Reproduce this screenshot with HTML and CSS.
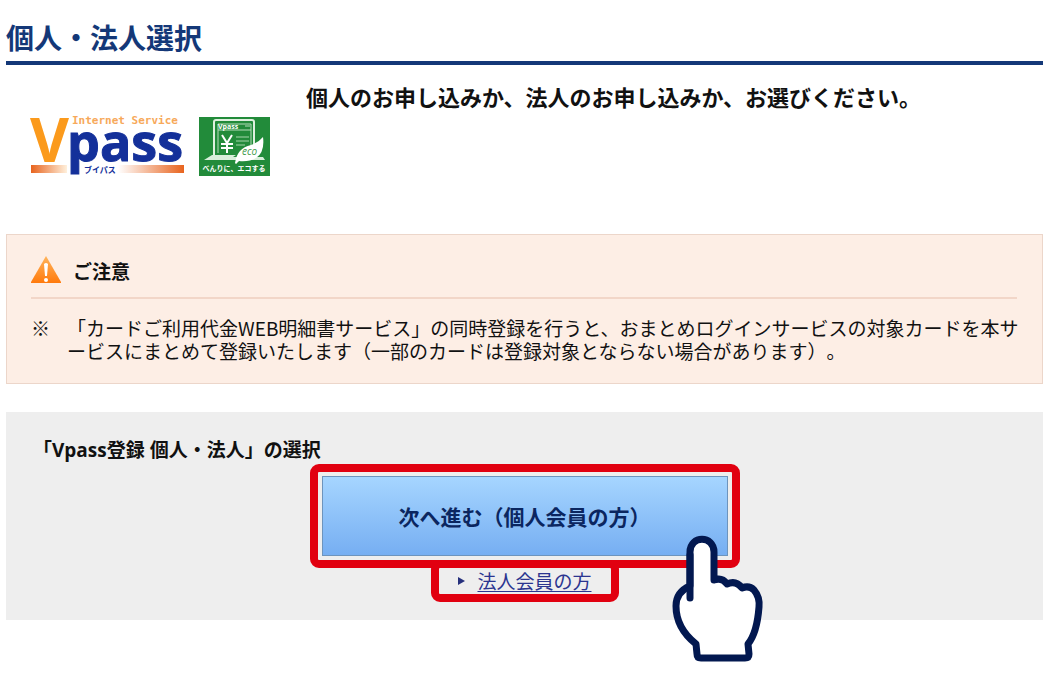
FILE: index.html
```html
<!DOCTYPE html>
<html lang="ja">
<head>
<meta charset="utf-8">
<meta name="viewport" content="width=device-width, initial-scale=1">
<title>個人・法人選択</title>
<link rel="stylesheet" href="styles.css">
</head>
<body>
<main class="page">
  <h1 class="page-title">個人・法人選択</h1>

  <section class="intro">
    <div class="logos">
      <svg class="logo-vpass" width="156" height="60" viewBox="0 0 156 60" role="img" aria-label="Vpass">
        <defs>
          <linearGradient id="barLeft"><stop offset="0" stop-color="#e8641e"/><stop offset="1" stop-color="#fff0dc"/></linearGradient>
          <linearGradient id="barRight"><stop offset="0" stop-color="#ffffff"/><stop offset="1" stop-color="#e8641e"/></linearGradient>
        </defs>
        <rect x="1" y="48" width="36" height="8" fill="url(#barLeft)"/>
        <rect x="88" y="48" width="66" height="8" fill="url(#barRight)"/>
        <text class="logo-v" x="0" y="45">V</text>
        <text class="logo-pass" x="37" y="44">pass</text>
        <text class="logo-service" x="42" y="7">Internet Service</text>
        <text class="logo-kana" x="54" y="56">ブイパス</text>
      </svg>
      <svg class="logo-eco" width="71" height="59" viewBox="0 0 71 59" role="img" aria-label="べんりに、エコする">
        <rect width="71" height="59" fill="#228b3a"/>
        <path d="M15 38V5q0-2 2-2h36q2 0 2 2v26" fill="none" stroke="#dff0df" stroke-width="2"/>
        <path d="M19 36V7h33v26" fill="none" stroke="#b4dcb8" stroke-width="1"/>
        <path d="M19 13h33M46 9h5" stroke="#b4dcb8"/>
        <text class="eco-brand" x="19" y="12">Vpass</text>
        <path d="M13 38h24l-3 2h30l2 3H5z" fill="#d8eeda"/>
        <path d="M23 18l5 8 5-8M28 26v10M22 27h12M22 31h12" fill="none" stroke="#fff" stroke-width="2"/>
        <path d="M37 20h13M37 24h13M37 28h9" stroke="#a5d5aa" stroke-width="1"/>
        <path d="M36 46Q38 31 52 28 60 25 64 20q2 15-7 21-7 4-17 3l-3 3z" fill="#fff"/>
        <text class="eco-word" x="43" y="38">eco</text>
        <text class="eco-copy" x="35" y="54">べんりに、エコする</text>
      </svg>
    </div>
    <p class="lead">個人のお申し込みか、法人のお申し込みか、お選びください。</p>
  </section>

  <section class="notice">
    <div class="notice-head">
      <svg class="notice-icon" width="30" height="28" viewBox="0 0 30 28" aria-hidden="true">
        <defs><linearGradient id="warn" x2="0" y2="1"><stop offset="0" stop-color="#ffb45c"/><stop offset="1" stop-color="#ff7a0c"/></linearGradient></defs>
        <path d="M15 0L30 26v1H0v-1z" fill="url(#warn)"/>
        <path d="M13 8q2-2 4 0l-1 12h-2z" fill="#fff"/>
        <circle cx="15" cy="24" r="2" fill="#fff"/>
      </svg>
      <h2 class="notice-title">ご注意</h2>
    </div>
    <div class="notice-body">
      <span class="notice-mark">※</span>
      <p class="notice-text">「カードご利用代金WEB明細書サービス」の同時登録を行うと、おまとめログインサービスの対象カードを本サービスにまとめて登録いたします（一部のカードは登録対象とならない場合があります）。</p>
    </div>
  </section>

  <section class="choice">
    <h2 class="choice-title">「Vpass登録 個人・法人」の選択</h2>
    <div class="frame frame-main">
      <button class="next" type="button">次へ進む（個人会員の方）</button>
      <svg class="hand" width="92" height="128" viewBox="0 0 92 128" aria-hidden="true">
        <path d="M24 109Q4 93 4 71Q4 57 18 51V17C18 0 42 0 42 17V45Q50 42 55 49Q64 45 70 53Q77 50 82 55Q88 62 87 72Q85 98 76 109L77 119Q77 123 73 123H29Q25 123 25 119z" fill="#fff" stroke="#021850" stroke-width="7" stroke-linejoin="round"/>
        <path d="M18 20V63" fill="none" stroke="#021850" stroke-width="7" stroke-linecap="round"/>
      </svg>
    </div>
    <div class="frame frame-sub">
      <svg width="8" height="9" viewBox="0 0 8 9" aria-hidden="true"><path d="M1 0L8 4L1 8z" fill="#26307c"/></svg>
      <a class="corporate" href="#">法人会員の方</a>
    </div>
  </section>
</main>
</body>
</html>
```
FILE: styles.css
```css
* { box-sizing: border-box; }

body {
  margin: 0;
  background: #fff;
  color: #111;
  font-family: "Noto Sans CJK JP", "Noto Sans", sans-serif;
  font-size: 19px;
  line-height: 23px;
  text-spacing-trim: space-all;
}

h1, h2, p { margin: 0; }

.page { padding: 16px 5px 64px 6px; }

.page-title {
  padding-bottom: 3px;
  border-bottom: 4px solid #143878;
  color: #143878;
  font-size: 28px;
  line-height: 42px;
}

.intro {
  display: flex;
  gap: 36px;
  padding: 16px 0 57px 24px;
}

.logos {
  display: flex;
  gap: 13px;
  padding-top: 36px;
}

.logos svg { display: block; overflow: visible; }

.lead {
  font-size: 22px;
  font-weight: 700;
  line-height: 30px;
}

.logo-v { fill: #fb9a1c; font: 700 60px "Open Sans", sans-serif; }
.logo-pass {
  fill: #14309a;
  stroke: #14309a;
  font: 700 52px "Open Sans", sans-serif;
}
.logo-service { fill: #f7a95a; font: 700 11px "DejaVu Sans Mono", monospace; }
.logo-kana { fill: #14309a; font: 700 8px "Noto Sans CJK JP", sans-serif; }
.eco-brand { fill: #fff; font: 700 7px "Open Sans", sans-serif; }
.eco-word { fill: #3f9a4c; font: italic 10px "Open Sans", sans-serif; }
.eco-copy { fill: #fff; font: 700 7px "Noto Sans CJK JP", sans-serif; text-anchor: middle; }

.notice {
  padding: 16px 25px 21px 24px;
  border: 1px solid #ecd6ca;
  background: #fdeee5;
}

.notice-head {
  display: flex;
  align-items: center;
  gap: 12px;
  height: 48px;
  padding-bottom: 8px;
  border-bottom: 2px solid #f2d6c8;
}

.notice-title { font-size: 19px; }

.notice-body {
  display: flex;
  gap: 17px;
  padding-top: 17px;
}

.notice-mark { flex: none; }

.notice-text {
  flex: 1;
  margin-right: -8px;
  line-break: loose;
}

.choice {
  margin-top: 28px;
  padding: 24px 27px 18px;
  background: #eee;
}

.choice-title {
  font-family: "Open Sans", "Noto Sans CJK JP", sans-serif;
  font-size: 19px;
  line-height: 28px;
}

.frame {
  position: relative;
  margin: 0 auto;
  border: 8px solid #e10010;
  border-radius: 9px;
}

.frame-main {
  z-index: 1;
  max-width: 430px;
  padding: 4px;
}

.next {
  display: block;
  width: 100%;
  height: 80px;
  padding: 0;
  border: 1px solid #6d94bd;
  background: linear-gradient(#a6d5ff, #76aef2);
  color: #0b2660;
  font: 700 21px "Noto Sans CJK JP", sans-serif;
  cursor: pointer;
}

.hand {
  position: absolute;
  top: 63px;
  right: -32px;
}

.frame-sub {
  display: flex;
  align-items: center;
  justify-content: center;
  gap: 12px;
  max-width: 188px;
  height: 42px;
  margin-top: -8px;
}

.corporate {
  color: #2b3590;
  line-height: 26px;
  text-decoration: underline;
  text-underline-offset: 2px;
}
```
